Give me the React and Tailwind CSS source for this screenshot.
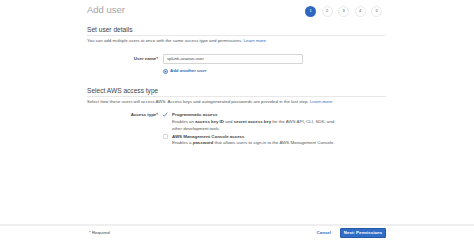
export default function App() {
  const steps = [1, 2, 3, 4, 5];
  return (
    <div className="w-[474px] h-[240px] bg-white overflow-hidden flex flex-col font-['Liberation_Sans',Arial,sans-serif] text-[#555]">
      <div className="flex-1">
        <div className="ml-[87px] w-[299px]">
          <div className="h-[22px] flex items-center justify-between">
            <h1 className="text-[9.5px] leading-none text-[#a3a3a3] mt-[-2px]">Add user</h1>
            <div className="flex gap-[5.5px] mr-[4px]">
              {steps.map((s) => (
                <div
                  key={s}
                  className={
                    s === 1
                      ? "w-[11px] h-[11px] rounded-full bg-[#2f67c0] text-white text-[4px] flex items-center justify-center"
                      : "w-[11px] h-[11px] rounded-full bg-white border border-[#e8e8e8] text-[#555] text-[4px] flex items-center justify-center"
                  }
                >
                  {s}
                </div>
              ))}
            </div>
          </div>

          <div className="h-[14px] flex items-end pb-[1.5px] border-b border-[#e8e8e8]">
            <h2 className="text-[6.6px] leading-none text-[#444]">Set user details</h2>
          </div>
          <p className="mt-[3px] text-[4.4px] leading-[4.4px] text-[#555]">
            You can add multiple users at once with the same access type and permissions.{" "}
            <span className="text-[#2a6ebb]">Learn more</span>
          </p>

          <div className="mt-[10.6px] flex items-center">
            <div className="w-[71px] text-right text-[4.4px] font-bold text-[#444]">User name*</div>
            <div className="ml-[5px] w-[140px] h-[10px] border border-[#d6d6d6] rounded-[1px] flex items-center px-[3px] text-[4.2px] text-[#444]">
              splunk-avanan-user
            </div>
          </div>
          <div className="mt-[5px] ml-[76px] flex items-center gap-[2px] text-[4.4px] leading-[4.4px] font-bold text-[#2a6ebb]">
            <svg width="5" height="5" viewBox="0 0 10 10">
              <circle cx="5" cy="5" r="4" fill="none" stroke="#2a6ebb" strokeWidth="1.6" />
              <path d="M5 3v4M3 5h4" stroke="#2a6ebb" strokeWidth="1.4" />
            </svg>
            <span>Add another user</span>
          </div>

          <div className="mt-[8.6px] h-[14px] flex items-end pb-[1.5px] border-b border-[#e8e8e8]">
            <h2 className="text-[6.6px] leading-none text-[#444]">Select AWS access type</h2>
          </div>
          <p className="mt-[3px] text-[4.4px] leading-[4.4px] text-[#555]">
            Select how these users will access AWS. Access keys and autogenerated passwords are provided in the last step.{" "}
            <span className="text-[#2a6ebb]">Learn more</span>
          </p>

          <div className="mt-[7.3px] flex items-start">
            <div className="w-[71px] text-right text-[4.4px] leading-[7px] font-bold text-[#444]">Access type*</div>
            <div className="ml-[4px] w-[10px] h-[7px] flex items-center">
              <svg width="6" height="5" viewBox="0 0 12 10">
                <path d="M1.5 5.5l3 3 6-7" fill="none" stroke="#4a6f9c" strokeWidth="1.6" />
              </svg>
            </div>
            <div className="text-[4.4px] leading-[7px]">
              <div className="font-bold text-[#444]">Programmatic access</div>
              <div className="w-[170px]">
                Enables an <b className="text-[#444]">access key ID</b> and <b className="text-[#444]">secret access key</b> for the AWS API, CLI, SDK, and other development tools.
              </div>
            </div>
          </div>
          <div className="mt-[1px] flex items-start">
            <div className="w-[71px]" />
            <div className="ml-[5px] w-[9px] h-[7px] flex items-center">
              <div className="w-[5px] h-[5px] border border-[#d8d8d8] rounded-[1px] bg-white" />
            </div>
            <div className="text-[4.4px] leading-[7px]">
              <div className="font-bold text-[#444]">AWS Management Console access</div>
              <div className="leading-[5px]">
                Enables a <b className="text-[#444]">password</b> that allows users to sign-in to the AWS Management Console.
              </div>
            </div>
          </div>
        </div>
      </div>

      <div className="h-[16px] border-t-2 border-[#efefef] flex items-center">
        <div className="ml-[87px] w-[299px] flex items-center">
          <span className="ml-[2px] text-[4.4px] text-[#444]">* Required</span>
          <span className="ml-auto text-[4.4px] font-bold text-[#2a6ebb]">Cancel</span>
          <button className="ml-[9px] w-[46px] h-[10px] rounded-[1px] bg-[#2f6dc6] border border-[#2759a6] text-white text-[4.4px] font-bold flex items-center justify-center">
            Next: Permissions
          </button>
        </div>
      </div>
    </div>
  );
}
